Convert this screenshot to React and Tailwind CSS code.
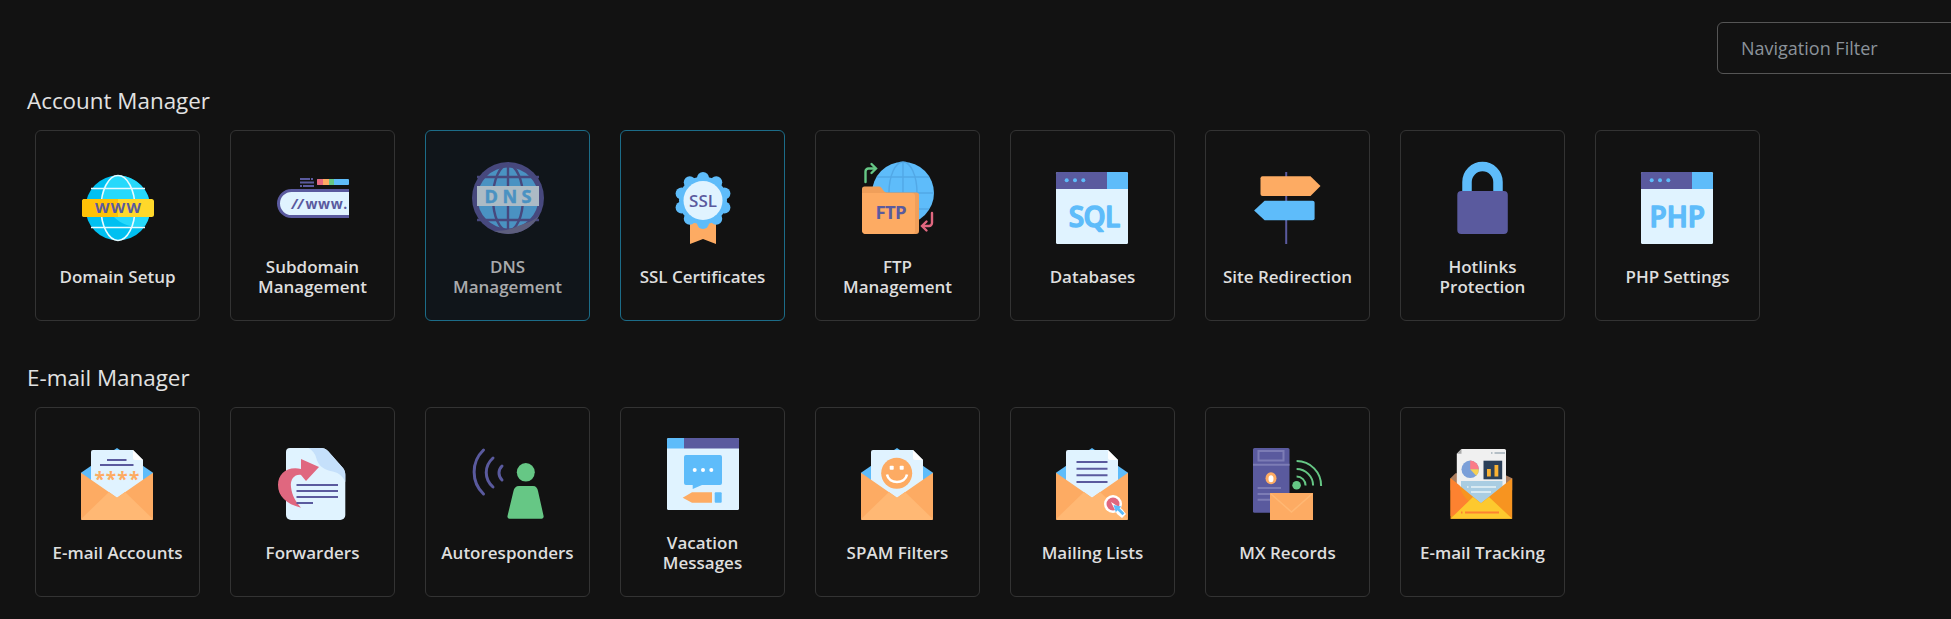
import React from "react";

const PURPLE = "#5a5a9e";
const BLUE = "#5ebcfa";
const PALE = "#e0f3ff";
const ORANGE = "#fdab63";
const GREEN = "#66c785";
const PINK = "#e0677f";

const Icon = ({ children }) => (
  <svg viewBox="0 0 72 72" className="w-[72px] h-[72px] shrink-0 overflow-visible">
    {children}
  </svg>
);

const GlobeWww = () => (
  <Icon>
    <circle cx="36" cy="36" r="32.5" fill="#00c0f1" />
    <path d="M36 3.5a32.5 32.5 0 0 1 27 50c-8 3-24 2-36-14S20 8 36 3.5z" fill="#26d9fb" />
    <ellipse cx="36" cy="36" rx="17" ry="32.5" fill="none" stroke="#e8fbff" strokeWidth="1.6" />
    <path d="M9 16.5h54M9 55.5h54" stroke="#e8fbff" strokeWidth="1.6" />
    <rect x="0" y="27" width="72" height="18" rx="2.5" fill="#ffd82a" />
    <path d="M2.5 27H36v18H2.5A2.5 2.5 0 0 1 0 42.5v-13A2.5 2.5 0 0 1 2.5 27z" fill="#ffc107" />
    <text x="36" y="41.3" textAnchor="middle" fontSize="15" fontWeight="700" fill={PURPLE} textLength="46">
      WWW
    </text>
  </Icon>
);

const AddressBar = () => (
  <Icon>
    <path d="M23 16h10v2H23zM34 16h2v2h-2zM23 19.5h14v2H23zM23 23h2v2h-2zM26 23h11v2H26z" fill={PURPLE} />
    <rect x="40" y="17" width="32" height="6" rx="1" fill={BLUE} />
    <path d="M41 17h5v6h-5a1 1 0 0 1-1-1v-4a1 1 0 0 1 1-1z" fill="#e8697f" />
    <rect x="46" y="17" width="6" height="6" fill={ORANGE} />
    <rect x="52" y="17" width="5" height="6" fill={GREEN} />
    <path d="M14.5 27H72v29H14.5a14.5 14.5 0 0 1 0-29z" fill={PURPLE} />
    <path d="M14.5 30H72v23H14.5a11.5 11.5 0 0 1 0-23z" fill={PALE} />
    <text y="47" fontSize="14" fontWeight="700" fill={PURPLE}>
      <tspan x="14.5" fontStyle="italic">//</tspan>
      <tspan x="28.5" letterSpacing=".6">www.</tspan>
    </text>
  </Icon>
);

const GlobeDns = () => (
  <Icon>
    <circle cx="36" cy="36" r="36" fill={PURPLE} />
    <circle cx="36" cy="36" r="30.5" fill={BLUE} />
    <g fill="none" stroke={PURPLE} strokeWidth="2.4">
      <ellipse cx="36" cy="36" rx="15" ry="33" />
      <path d="M36 3v66M5 15h62M5 58h62" />
    </g>
    <path d="M36 72a36 36 0 0 0 32-20c-5 8-16 9-24 13-7 3-14 4-22 4a36 36 0 0 0 14 3z" fill="#77779f" />
    <rect x="5" y="24" width="62" height="20" fill={PALE} />
    <text x="36" y="41" textAnchor="middle" fontSize="18" fontWeight="700" fill={BLUE} stroke={BLUE} strokeWidth=".5" textLength="47">
      DNS
    </text>
  </Icon>
);

const lobes = [0, 36, 72, 108, 144, 180, 216, 252, 288, 324];

const SslBadge = () => (
  <Icon>
    <path d="M23 48h26v24l-13-5-13 5z" fill={ORANGE} />
    <circle cx="36" cy="28.5" r="24" fill={BLUE} />
    {lobes.map((a) => (
      <circle
        key={a}
        cx={36 + 22.5 * Math.sin((a * Math.PI) / 180)}
        cy={28.5 - 22.5 * Math.cos((a * Math.PI) / 180)}
        r="6"
        fill={BLUE}
      />
    ))}
    <circle cx="36" cy="28.5" r="19.5" fill={PALE} />
    <text x="36" y="35" textAnchor="middle" fontSize="17" fontWeight="600" fill={PURPLE} textLength="28">
      SSL
    </text>
  </Icon>
);

const FtpFolder = () => (
  <Icon>
    <circle cx="41" cy="31" r="31" fill={BLUE} />
    <g fill="none" stroke="#52a8e6" strokeWidth="1.4">
      <ellipse cx="41" cy="31" rx="14" ry="31" />
      <path d="M41 0v62M10 31h62M15 15h52M15 47h52" />
    </g>
    <path d="M3.5 20V9.5a3 3 0 0 1 3-3h6" fill="none" stroke={GREEN} strokeWidth="2.4" strokeLinecap="round" />
    <path d="M9.5 2l4.5 4.5-4.5 4.5" fill="none" stroke={GREEN} strokeWidth="2.4" strokeLinecap="round" />
    <path d="M70 51v10a3 3 0 0 1-3 3h-5.500" fill="none" stroke={PINK} strokeWidth="2.4" strokeLinecap="round" />
    <path d="M64.500 59.500l-4.500 4.500 4.500 4.500" fill="none" stroke={PINK} strokeWidth="2.4" strokeLinecap="round" />
    <path d="M0 27a2.500 2.500 0 0 1 2.500-2.500H17c2 0 3 2 4 3.500s2 2.500 4 2.500h29.500A2.500 2.500 0 0 1 57 33v36a3 3 0 0 1-3 3H4a4 4 0 0 1-4-4z" fill="#f09f5a" />
    <path d="M0 31h50a3 3 0 0 1 3 3v35a3 3 0 0 1-3 3H4a4 4 0 0 1-4-4z" fill={ORANGE} />
    <text x="29" y="57.300" textAnchor="middle" fontSize="18.500" fontWeight="700" fill={PURPLE} textLength="31">
      FTP
    </text>
  </Icon>
);

const CodeWindow = ({ label, x, width }) => (
  <Icon>
    <rect width="72" height="72" rx="1.500" fill={PALE} />
    <path d="M1.500 0H51v17H0V1.500A1.500 1.500 0 0 1 1.500 0z" fill={PURPLE} />
    <path d="M51 0h19.500A1.500 1.500 0 0 1 72 1.500V17H51z" fill={BLUE} />
    <circle cx="10.700" cy="8.300" r="2" fill={BLUE} />
    <circle cx="19" cy="8.300" r="2" fill={BLUE} />
    <circle cx="27.300" cy="8.300" r="2" fill={BLUE} />
    <text
      x={x}
      y="54.500"
      fontSize="28"
      fontWeight="600"
      fill={BLUE}
      stroke={BLUE}
      strokeWidth="1.400"
      strokeLinejoin="round"
      textLength={width}
    >
      {label}
    </text>
  </Icon>
);

const Signpost = () => (
  <Icon>
    <rect x="33.200" y="0" width="2" height="72" fill={PURPLE} />
    <path d="M10.500 4.300h48l10 9.800-10 9.900h-48a2 2 0 0 1-2-2V6.300a2 2 0 0 1 2-2z" fill={ORANGE} />
    <path d="M60.600 28.700h-48l-10.500 9.700 10.500 9.900h48a2 2 0 0 0 2-2V30.700a2 2 0 0 0-2-2z" fill={BLUE} />
  </Icon>
);

const Padlock = () => (
  <Icon>
    <path d="M20 31V20a15.500 15.500 0 0 1 31 0v11" fill="none" stroke={BLUE} strokeWidth="9.500" />
    <rect x="10.300" y="29" width="50.500" height="43" rx="4" fill={PURPLE} />
  </Icon>
);

// open envelope shared by the mail icons, children sit on the sheet
const Envelope = ({ children, overlay }) => (
  <Icon>
    <path d="M0 24.700L36 0l36 24.700V40H0z" fill={BLUE} />
    <path d="M12 2h40l10 10v44H10V4a2 2 0 0 1 2-2z" fill={PALE} />
    <path d="M52 2l10 10H54a2 2 0 0 1-2-2z" fill="#fff" />
    {children}
    <path d="M0 24.700l36 25 36-25V70.500a1.500 1.500 0 0 1-1.500 1.500h-69A1.500 1.500 0 0 1 0 70.500z" fill={ORANGE} />
    <path d="M0 71l28-27 8 5.700 8-5.700 28 27a1.500 1.500 0 0 1-1.500 1h-69A1.500 1.500 0 0 1 0 71z" fill="#ffb874" />
    {overlay}
  </Icon>
);

const MailAccounts = () => (
  <Envelope>
    <path d="M26 12h19.500M19 17h33.500" stroke={PURPLE} strokeWidth="2" />
    <text x="13.500 24.700 36.300 48" y="37.500" fontSize="19" fontWeight="700" fill={ORANGE}>
      ****
    </text>
  </Envelope>
);

const ForwardDoc = () => (
  <Icon>
    <path d="M14 0h31c3 0 5 1 7 3l15 17c1.500 2 2.300 4 2.300 7v40a5 5 0 0 1-5 5H15a5 5 0 0 1-5-5V4a4 4 0 0 1 4-4z" fill={PALE} />
    <path d="M32 0h13c3 0 5 1 7 3l15 17c1.500 2 2.300 4 2.300 7v7c-3-7-8-10-15-11-9-2-13-8-14-13-1-4-4-8-8-10z" fill="#c5e0fb" />
    <path d="M25 59.700C10 56 2 48 2 37c0-11 9-19 23-16v-10l18 8-13 14-5-6c-6-1-11 4-10 12 1 9 5 15 10 20.700z" fill={PINK} />
    <path d="M20.500 37H62M20.500 43H62M20.500 49H62M20.500 55H37" stroke={PURPLE} strokeWidth="2" />
  </Icon>
);

const Autoresponder = () => (
  <Icon>
    <g fill="none" stroke={PURPLE} strokeWidth="3" strokeLinecap="round">
      <path d="M11.500 2C-1 14-1 34 11.500 46" />
      <path d="M21 10c-9 8-9 21 0 29" />
      <path d="M30 18c-4 4-4 10 0 14" />
    </g>
    <ellipse cx="53.800" cy="24.300" rx="9" ry="9.300" fill={GREEN} />
    <path d="M47 38h14c3 0 4.500 2 5 5l5.600 25c.3 1.500-.5 2.700-2 2.700H37.500c-1.500 0-2.300-1.200-2-2.700L41.500 43c.5-3 2.500-5 5.500-5z" fill={GREEN} />
  </Icon>
);

const VacationWindow = () => (
  <Icon>
    <rect width="72" height="72" rx="1.500" fill={PALE} />
    <path d="M1.500 0H17v10.500H0V1.500A1.500 1.500 0 0 1 1.500 0z" fill={BLUE} />
    <path d="M17 0h53.500A1.500 1.500 0 0 1 72 1.500v9H17z" fill={PURPLE} />
    <path d="M19 17h34a2 2 0 0 1 2 2v26a2 2 0 0 1-2 2H35l-9.300 4v-4H19a2 2 0 0 1-2-2V19a2 2 0 0 1 2-2z" fill={BLUE} />
    <circle cx="27.700" cy="32" r="2" fill="#fff" />
    <circle cx="36" cy="32" r="2" fill="#fff" />
    <circle cx="44.300" cy="32" r="2" fill="#fff" />
    <path d="M25 54.300h20v10.400H25l-9.300-5z" fill={ORANGE} />
    <rect x="47.700" y="54.300" width="7" height="10.400" rx="1" fill={BLUE} />
  </Icon>
);

const MailSmile = () => (
  <Envelope>
    <circle cx="35.700" cy="25.300" r="15.500" fill={ORANGE} />
    <rect x="28.700" y="17.700" width="4" height="4" rx=".8" fill="#fff" />
    <rect x="38.700" y="17.700" width="4" height="4" rx=".8" fill="#fff" />
    <path d="M26 26.500c2 10 18 10 20 0" fill="none" stroke="#fff" strokeWidth="2.600" />
  </Envelope>
);

const MailList = () => (
  <Envelope
    overlay={
      <g>
        <circle cx="57" cy="56" r="9" fill="#fff" />
        <circle cx="57" cy="56" r="6.500" fill={PINK} />
        <path d="M55 54l11 7 4 5-4 4-5-4z" fill="#fff" />
        <path d="M57.500 57l8 1.500-2 1.700 5 5-2 2-5-5-1.700 2z" fill={BLUE} />
      </g>
    }
  >
    <path d="M20.500 14h31M20.500 20.700h31M20.500 27.300h31M20.500 34h31" stroke={PURPLE} strokeWidth="2" />
  </Envelope>
);

const MxServer = () => (
  <Icon>
    <rect x="1" y="0" width="36.500" height="64.700" rx="1.500" fill={PURPLE} />
    <rect x="6.500" y="3" width="25" height="9.500" fill="none" stroke="#7c7cb5" strokeWidth="2" />
    <path d="M1 16.700h36.500M5.600 40H29M5.600 46H18M5.600 51.700H18" stroke="#7c7cb5" strokeWidth="2" />
    <ellipse cx="19" cy="30.300" rx="5.500" ry="6" fill={ORANGE} />
    <ellipse cx="19" cy="30.800" rx="2.500" ry="3.500" fill="#fff" />
    <circle cx="44.600" cy="37.300" r="4.300" fill={GREEN} />
    <g fill="none" stroke={GREEN} strokeWidth="2">
      <path d="M44.600 28.500a9 9 0 0 1 9 9" />
      <path d="M44.600 21a16.500 16.500 0 0 1 16.500 16.500" />
      <path d="M44.600 13a24.500 24.500 0 0 1 24.500 25" />
    </g>
    <rect x="18" y="45" width="43" height="27" fill={ORANGE} />
    <path d="M19 46l20.500 18L60 46" fill="none" stroke="#ffb874" strokeWidth="1.500" />
  </Icon>
);

const MailTracking = () => (
  <Icon>
    <path d="M4.500 30.300l5-5h46l10.700 5v12H4.500z" fill="#a97c5e" />
    <path d="M15.500 1h43a1.500 1.500 0 0 1 1.500 1.500V50H10.800V5.700z" fill="#f0f0f0" />
    <path d="M15.500 1v4.700h-4.700z" fill="#aaa" />
    <path d="M45 5h1.500M48.500 5H59" stroke="#b5bfc6" strokeWidth="2" />
    <circle cx="24.200" cy="21.300" r="8.700" fill="#7b9fd8" />
    <path d="M24.200 21.300v-8.700a8.700 8.700 0 0 1 8.700 8.700z" fill="#fb7b87" />
    <path d="M24.200 21.300h8.700a8.700 8.700 0 0 1-2.700 6.400z" fill="#f7d154" />
    <rect x="37.500" y="12.700" width="18.700" height="18.600" fill="#2b3f58" />
    <rect x="41" y="21" width="3.800" height="7.500" fill="#f9b233" />
    <rect x="48.500" y="17" width="3.800" height="11.500" fill="#f9b233" />
    <path d="M15 33h41.500v10L35 57 15 43z" fill="#a9cde2" />
    <path d="M21 39h1.500M25 39h25M25 44h20" stroke="#e8f3f8" strokeWidth="1.600" />
    <path d="M4.500 30.300L35 55.300l31.200-25v40.400H4.500z" fill="#f79420" />
    <path d="M4.500 30.300l9 7.300c2 10 8 16 17 21L4.500 68z" fill="#fd8230" />
    <path d="M4.500 70.700L27 49l8 6.300 8-6.300 23.200 21.700z" fill="#fdc92e" />
    <path d="M15 64.500h1.500M19 64.500h34" stroke="#fd8230" strokeWidth="1.800" />
  </Icon>
);

const accountTiles = [
  { title: "Domain Setup", icon: <GlobeWww /> },
  { title: "Subdomain Management", icon: <AddressBar /> },
  { title: "DNS Management", icon: <GlobeDns />, state: "dim" },
  { title: "SSL Certificates", icon: <SslBadge />, state: "hover" },
  { title: "FTP Management", icon: <FtpFolder /> },
  { title: "Databases", icon: <CodeWindow label="SQL" x={12.7} width={51.5} /> },
  { title: "Site Redirection", icon: <Signpost /> },
  { title: "Hotlinks Protection", icon: <Padlock /> },
  { title: "PHP Settings", icon: <CodeWindow label="PHP" x={8.5} width={55.5} /> },
];

const mailTiles = [
  { title: "E-mail Accounts", icon: <MailAccounts /> },
  { title: "Forwarders", icon: <ForwardDoc /> },
  { title: "Autoresponders", icon: <Autoresponder /> },
  { title: "Vacation Messages", icon: <VacationWindow /> },
  { title: "SPAM Filters", icon: <MailSmile /> },
  { title: "Mailing Lists", icon: <MailList /> },
  { title: "MX Records", icon: <MxServer /> },
  { title: "E-mail Tracking", icon: <MailTracking /> },
];

const Tile = ({ title, icon, state }) => (
  <a
    href="#"
    className={
      "w-[165px] h-[190.5px] shrink-0 rounded-[6px] border flex flex-col items-center justify-center pt-2 px-[12px] " +
      (state === "dim"
        ? "border-[#1c6c88] bg-[#10151a]"
        : state === "hover"
          ? "border-[#1c6c88]"
          : "border-[#333333]")
    }
  >
    <div className={state === "dim" ? "flex flex-col items-center gap-[23px] opacity-75" : "flex flex-col items-center gap-[23px]"}>
      {icon}
      <span className="text-[17px] leading-5 font-semibold text-center text-[#dedede]">{title}</span>
    </div>
  </a>
);

const Section = ({ title, tiles }) => (
  <section className="px-[27px]">
    <h2 className="h-7 leading-7 mb-[15px] text-[22.4px] font-medium text-[#e2e2e2]">{title}</h2>
    <div className="ml-2 flex gap-[30px]">
      {tiles.map((t) => (
        <Tile key={t.title} {...t} />
      ))}
    </div>
  </section>
);

const App = () => {
  return (
    <div className="w-full h-[619px] overflow-hidden bg-[#121212] font-['Open_Sans',sans-serif]">
      <div className="pt-[22px] flex justify-end">
        <input
          placeholder="Navigation Filter"
          className="w-[260px] h-[52px] shrink-0 -mr-[26px] px-[23px] rounded-[6px] border border-[#555555] bg-transparent text-[18px] outline-none placeholder:text-[#8b929a]"
        />
      </div>
      <div className="mt-[13px] flex flex-col gap-[43px]">
        <Section title="Account Manager" tiles={accountTiles} />
        <Section title="E-mail Manager" tiles={mailTiles} />
      </div>
    </div>
  );
};

export default App;
